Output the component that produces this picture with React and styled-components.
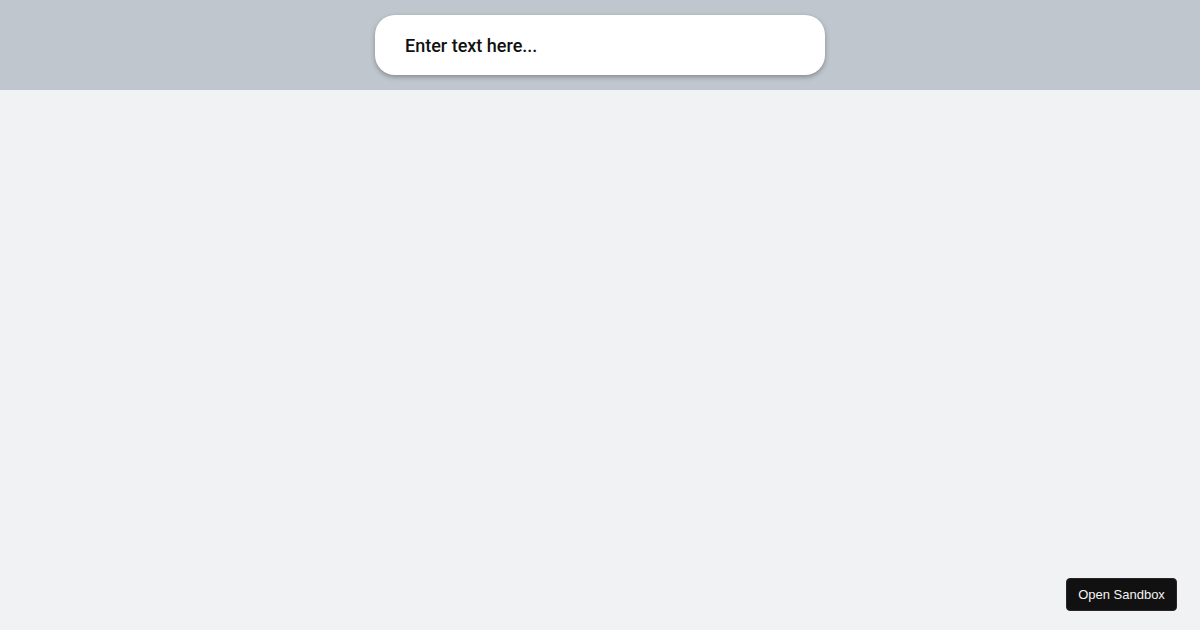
import React from 'react'
import styled, { createGlobalStyle } from 'styled-components'

const Global = createGlobalStyle`
  html, body { margin: 0; padding: 0; height: 100%; }
  body { background: #f0f2f4; font-family: Roboto, "Liberation Sans", sans-serif; }
  #root { min-height: 100vh; }
`

const Page = styled.div`
  min-height: 100vh;
  display: flex;
  flex-direction: column;
`

const Header = styled.header`
  height: 90px;
  background: #bfc6cd;
  display: flex;
  justify-content: center;
  align-items: flex-start;
  padding-top: 15px;
  box-sizing: border-box;
`

const Field = styled.input`
  width: 450px;
  height: 60px;
  box-sizing: border-box;
  border: none;
  border-radius: 20px;
  background: #fff;
  padding: 0 30px;
  font-family: Roboto, "Liberation Sans", sans-serif;
  font-size: 18px;
  font-weight: 500;
  color: #111;
  outline: none;
  box-shadow: 0 2px 5px rgba(0, 0, 0, 0.3);

  &::placeholder {
    color: #111;
    opacity: 1;
  }
`

const Body = styled.main`
  flex: 1;
  position: relative;
`

const SandboxButton = styled.button`
  position: fixed;
  right: 23px;
  bottom: 19px;
  box-sizing: border-box;
  width: 111px;
  height: 33px;
  padding: 0;
  border: 1px solid #2a2424;
  border-radius: 4px;
  background: #111;
  color: #f4f4f4;
  font-family: "Liberation Sans", Arial, sans-serif;
  font-size: 13px;
  text-align: center;
  cursor: pointer;
`

export default function App() {
  return (
    <Page>
      <Global />
      <Header>
        <Field type="text" placeholder="Enter text here..." />
      </Header>
      <Body />
      <SandboxButton>Open Sandbox</SandboxButton>
    </Page>
  )
}
